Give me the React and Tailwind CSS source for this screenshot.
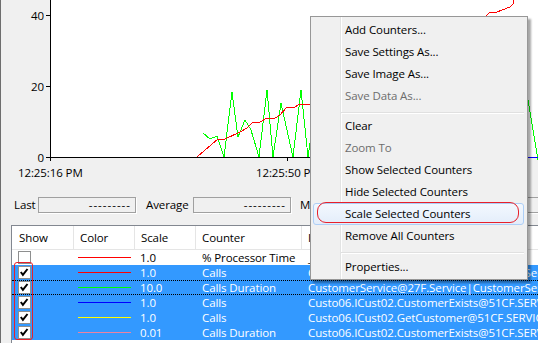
import React from "react";

const greenPts =
  "203,133 210,139 217,136 224,157 232,92 238,137 245,120 251,130 259,157 267,90 273,157 281,103 293,157 301,90 308,157 316,100 324,157 333,95 342,157 350,110 358,157 370,90 380,157 392,100 402,157 415,95 425,157 440,100 450,157 462,92 472,157 485,100 495,157 508,95 516,157 524,157 528,100 538,160";
const redPts =
  "197,157 218,139 225,139 240,132 247,128 253,122 260,122 267,118 275,118 280,115 287,107 295,107 300,104 312,104 330,98 350,92 370,85 390,75 410,66 430,55 450,42 470,30 486,16 490,12 497,12 510,7 513,4 514,0";

function Chart() {
  return (
    <svg width="537" height="190" className="block flex-none" shapeRendering="crispEdges">
      <g transform="translate(-1 0)">
        <rect x="51" y="0" width="487" height="157" fill="#ffffff" />
        <polyline points={greenPts} fill="none" stroke="#00ff00" strokeWidth="1" />
        <polyline points={redPts} fill="none" stroke="#ff0000" strokeWidth="1" />
        <line x1="50.5" y1="0" x2="50.5" y2="161" stroke="#000" />
        <line x1="46" y1="157.5" x2="400" y2="157.5" stroke="#000" />
        <line x1="400" y1="157.5" x2="538" y2="157.5" stroke="#0000ff" />
        <line x1="46" y1="15.5" x2="50" y2="15.5" stroke="#000" />
        <line x1="46" y1="86.5" x2="50" y2="86.5" stroke="#000" />
        <line x1="287.5" y1="157" x2="287.5" y2="161" stroke="#000" />
        <g fontFamily="'Open Sans', sans-serif" fontSize="11.5" letterSpacing="-0.1" fill="#000">
          <text x="44" y="19.5" textAnchor="end">40</text>
          <text x="44" y="90.5" textAnchor="end">20</text>
          <text x="44" y="161.5" textAnchor="end">0</text>
          <text x="18" y="176.5">12:25:16 PM</text>
          <text x="256" y="176.5">12:25:50 PM</text>
        </g>
      </g>
    </svg>
  );
}

function StatBox() {
  return (
    <div className="w-[98px] h-[16px] flex-none border border-[#a0a0a0] shadow-[1px_1px_0_#ffffff] flex items-center justify-end pr-[4px] leading-none tracking-[1px]">
      ---------
    </div>
  );
}

function Check({ checked }) {
  return (
    <div className="w-[13px] h-[13px] border border-[#8e8f8f] bg-white flex-none relative">
      {checked && (
        <svg width="11" height="11" viewBox="0 0 11 11" className="absolute left-0 top-0">
          <path d="M1.8 5 L3.9 7.8 L8.5 2" stroke="#000" strokeWidth="2" fill="none" />
        </svg>
      )}
    </div>
  );
}

const rows = [
  { checked: false, color: "#ff0000", scale: "1.0", counter: "% Processor Time", inst: "_Total", sel: false },
  { checked: true, color: "#ff0000", scale: "1.0", counter: "Calls", inst: "CustomerService@27F.Service|CustomerService", sel: true },
  { checked: true, color: "#00ff00", scale: "10.0", counter: "Calls Duration", inst: "CustomerService@27F.Service|CustomerService", sel: true, focus: true },
  { checked: true, color: "#0000ff", scale: "1.0", counter: "Calls", inst: "Custo06.ICust02.CustomerExists@51CF.SERVICE", sel: true },
  { checked: true, color: "#ffff00", scale: "1.0", counter: "Calls", inst: "Custo06.ICust02.GetCustomer@51CF.SERVICE", sel: true },
  { checked: true, color: "#ee82a0", scale: "0.01", counter: "Calls Duration", inst: "Custo06.ICust02.CustomerExists@51CF.SERVICE", sel: true },
];

function MenuItem({ label, disabled, hot }) {
  return (
    <div
      className={
        "h-[22px] flex items-center pl-[31px] border rounded-[3px] whitespace-nowrap " +
        (hot
          ? "border-[#aecff7] bg-gradient-to-b from-[#f3f8fe] to-[#e3edfa] "
          : "border-transparent ") +
        (disabled ? "text-[#6d6d6d]" : "text-black")
      }
    >
      {label}
    </div>
  );
}

function MenuSep({ h }) {
  return (
    <div className={h === 9 ? "h-[9px] pt-[5px]" : "h-[8px] pt-[5px]"}>
      <div className="ml-[28px] h-px bg-[#e0e0e0]" />
      <div className="ml-[28px] h-px bg-white" />
    </div>
  );
}

export default function App() {
  return (
    <div className="relative w-[538px] h-[343px] overflow-hidden bg-[#f0f0f0] flex font-['Open_Sans',sans-serif] text-[11.5px] tracking-[-0.1px] text-black">
      <div className="w-px flex-none bg-[#6e6e6e]" />
      <div className="flex-1 flex flex-col min-w-0">
        <Chart />
        <div className="flex items-center pt-[7px] pl-[13px] h-[23px] whitespace-nowrap flex-none">
          <span className="w-[24px] flex-none">Last</span>
          <StatBox />
          <span className="ml-[10px] w-[47px] flex-none">Average</span>
          <StatBox />
          <span className="ml-[9px] w-[52px] flex-none">Minimum</span>
          <StatBox />
          <span className="ml-[10px] w-[55px] flex-none">Maximum</span>
          <StatBox />
        </div>
        <div className="mt-[12px] ml-[10px] border-l border-t border-[#828790] bg-white flex-1 flex flex-col overflow-hidden">
          <div className="h-[24px] flex-none flex border-b border-[#e5e5e5] whitespace-nowrap">
            <div className="w-[62px] flex-none border-r border-[#e5e5e5] pl-[7px] flex items-center">Show</div>
            <div className="w-[61px] flex-none border-r border-[#e5e5e5] pl-[6px] flex items-center">Color</div>
            <div className="w-[61px] flex-none border-r border-[#e5e5e5] pl-[6px] flex items-center">Scale</div>
            <div className="w-[106px] flex-none border-r border-[#e5e5e5] pl-[6px] flex items-center">Counter</div>
            <div className="flex-1 pl-[6px] flex items-center">Instance</div>
          </div>
          {rows.map((r, i) => (
            <div
              key={i}
              className={
                "h-[15px] flex-none flex items-center whitespace-nowrap " +
                (r.sel ? "bg-[#3399ff] text-white " : "bg-white text-black ") +
                (r.focus ? "border-y border-dotted border-black" : "")
              }
            >
              <div className="w-[62px] flex-none pl-[6px] flex items-center">
                <Check checked={r.checked} />
              </div>
              <div className="w-[61px] flex-none pl-[4px] flex items-center">
                <div className="w-[53px] h-px" style={{ backgroundColor: r.color }} />
              </div>
              <div className="w-[61px] flex-none pl-[5px] leading-[15px]">{r.scale}</div>
              <div className="w-[106px] flex-none pl-[6px] leading-[15px]">{r.counter}</div>
              <div className="flex-1 pl-[6px] leading-[15px] overflow-hidden">{r.inst}</div>
            </div>
          ))}
        </div>
      </div>

      <div className="absolute left-[14px] top-[262px] w-[19px] h-[78px] border border-[#e8202a] rounded-[3px]" />

      <div className="absolute left-[310px] top-[16px] w-[218px] h-[264px] border border-[#979797] bg-[#f0f0f0] shadow-[3px_3px_2px_rgba(0,0,0,0.35)] pt-[2px] pl-[2px] pr-[3px]">
        <div className="absolute left-[29px] top-0 bottom-0 w-px bg-[#e2e3e3]" />
        <div className="absolute left-[30px] top-0 bottom-0 w-px bg-white" />
        <div className="relative flex flex-col">
          <MenuItem label="Add Counters..." />
          <MenuItem label="Save Settings As..." />
          <MenuItem label="Save Image As..." />
          <MenuItem label="Save Data As..." disabled />
          <MenuSep h={8} />
          <MenuItem label="Clear" />
          <MenuItem label="Zoom To" disabled />
          <MenuItem label="Show Selected Counters" />
          <MenuItem label="Hide Selected Counters" />
          <MenuItem label="Scale Selected Counters" hot />
          <MenuItem label="Remove All Counters" />
          <MenuSep h={9} />
          <MenuItem label="Properties..." />
        </div>
      </div>

      <div className="absolute left-[317px] top-[202px] w-[202px] h-[21px] border border-[#e8202a] rounded-[9px]" />
    </div>
  );
}
